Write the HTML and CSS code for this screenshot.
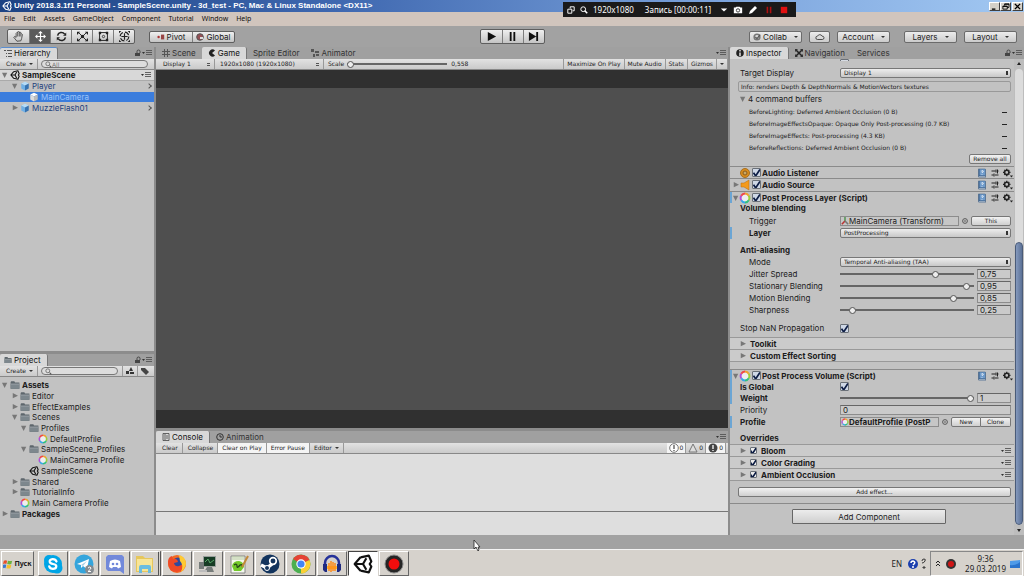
FILE: index.html
```html
<!DOCTYPE html>
<html lang="en">

<head>
    <meta charset="UTF-8">
    <title>Unity 2018.3.1f1 Personal - SampleScene.unity</title>
    <!-- Styles  -->
    <link rel="stylesheet" href="styles.css">
</head>

<body>
    <!-- Icon set -->
    <svg class="icon-defs" width="0" height="0">
        <symbol id="unity" viewBox="0 0 24 24">
            <path d="M12 12L4 12M12 12L16 5M12 12L16 19M9 4L2 12L9 20M9 4L19 2L22 9L20 12L22 15L19 22L9 20" fill="none" stroke="currentColor" stroke-width="2.600" stroke-linejoin="round" />
        </symbol>
        <symbol id="lock" viewBox="0 0 8 8">
            <path d="M1 4h5v3H1z" fill="#444" />
            <path d="M3 4V2.500a1.500 1.500 0 0 1 3 0V4" fill="none" stroke="#444" />
        </symbol>
        <symbol id="menu" viewBox="0 0 10 8">
            <path d="M0 3h3L1.500 5z" fill="#333" />
            <path d="M4 1.500h6M4 3.500h6M4 5.500h6" stroke="#555" stroke-width=".900" />
        </symbol>
        <symbol id="down" viewBox="0 0 8 8"><path d="M0 1h7L3.500 8z" fill="#777" /></symbol>
        <symbol id="right" viewBox="0 0 8 8"><path d="M1 0v7l7-3.500z" fill="#777" /></symbol>
        <symbol id="cube" viewBox="0 0 16 16">
            <path d="M8 1l6 3-6 3-6-3z" fill="#b5dcf8" />
            <path d="M2 4l6 3v8l-6-3z" fill="#6fb0e6" />
            <path d="M14 4L8 7v8l6-3z" fill="#3673b2" />
        </symbol>
        <symbol id="cube-plain" viewBox="0 0 16 16">
            <path d="M8 1l6 3-6 3-6-3z" fill="#fff" />
            <path d="M2 4l6 3v8l-6-3z" fill="#ddd" />
            <path d="M14 4L8 7v8l6-3z" fill="#bbb" />
        </symbol>
        <symbol id="folder" viewBox="0 0 16 14">
            <path d="M1 2l1-1h5l1 2h7v10H1z" fill="#5d666c" />
            <path d="M1 5h14v8H1z" fill="#7d878d" />
            <path d="M1 5.500h14" stroke="#aab1b5" />
        </symbol>
        <symbol id="ring" viewBox="0 0 16 16">
            <circle cx="8" cy="8" r="5.500" fill="#eee" />
            <g fill="none" stroke-width="2.600">
                <path d="M8 2a6 6 0 0 1 5 3" stroke="#f0a030" />
                <path d="M13 5a6 6 0 0 1 0 6" stroke="#9ad03a" />
                <path d="M13 11a6 6 0 0 1-5 3" stroke="#30c080" />
                <path d="M8 14a6 6 0 0 1-5-3" stroke="#38a8e8" />
                <path d="M3 11a6 6 0 0 1 0-6" stroke="#b050d8" />
                <path d="M3 5a6 6 0 0 1 5-3" stroke="#f04848" />
            </g>
        </symbol>
        <symbol id="search" viewBox="0 0 10 10">
            <path d="M6.500 6.500L9 9" stroke="#555" stroke-width="1.500" />
            <circle cx="4" cy="4" r="2.800" fill="none" stroke="#555" />
        </symbol>
        <symbol id="book" viewBox="0 0 16 16">
            <path d="M2 1h11l1 1v13H3l-1-1z" fill="#365980" />
            <path d="M4 2h9v10H4z" fill="#6f9bcb" />
            <path d="M3 14h10" stroke="#fff" />
            <path d="M7 5q3-2 3 1q-2 1-2 2M8 10v1" fill="none" stroke="#fff" stroke-width="1.400" />
        </symbol>
        <symbol id="preset" viewBox="0 0 16 16">
            <path d="M1 4h8M12 4h3M10 1v6M1 12h4M8 12h7M6 9v6M13 1v8" stroke="#222" stroke-width="2" />
        </symbol>
        <symbol id="gear" viewBox="0 0 16 16">
            <circle cx="6" cy="7" r="3.500" fill="none" stroke="#222" stroke-width="2.600" />
            <path d="M6 1v2M6 11v2M0 7h2M10 7h2M2 3l1 1M9 10l1 1M10 3l-1 1M3 10l-1 1" stroke="#222" stroke-width="2" />
            <path d="M11 12h5l-2.500 3z" fill="#222" />
        </symbol>
        <symbol id="target" viewBox="0 0 10 10">
            <circle cx="5" cy="5" r="3" fill="none" stroke="#555" stroke-width="1.200" />
            <circle cx="5" cy="5" r="1" fill="#555" />
        </symbol>
    </svg>

    <!-- Title bar -->
    <header class="titlebar">
        <svg class="i10"><use href="#unity" /></svg>
        <h1>Unity 2018.3.1f1 Personal - SampleScene.unity - 3d_test - PC, Mac &amp; Linux Standalone &lt;DX11&gt;</h1>
        <div class="window-buttons">
            <button aria-label="Minimize"><svg viewBox="0 0 10 8"><path d="M2 7h4" stroke="#000" stroke-width="1.500" /></svg></button>
            <button aria-label="Restore"><svg viewBox="0 0 10 8"><path d="M4 3V1h5v4H7M4 1.500h5M2 3.500h5V7H2zM2 4h5" fill="none" stroke="#000" /></svg></button>
            <button aria-label="Close"><svg viewBox="0 0 10 8"><path d="M2 1l6 6M8 1L2 7" stroke="#000" stroke-width="1.500" /></svg></button>
        </div>
    </header>
    <div class="recorder">
        <svg viewBox="0 0 10 10" class="i8"><path d="M4 3V1h5v5H7M1 4h5v5H1z" fill="none" stroke="#fff" stroke-width="1.200" /></svg>
        <svg viewBox="0 0 10 10" class="i8"><circle cx="4" cy="4" r="3" fill="none" stroke="#fff" stroke-width="1.200" /><path d="M6 6l3 3" stroke="#fff" stroke-width="2" /></svg>
        <span class="rec-size">1920x1080</span>
        <span class="rec-time">Запись [00:00:11]</span>
        <svg viewBox="0 0 10 10" class="i8"><path d="M1 3h8L5 7z" fill="#fff" /></svg>
        <svg viewBox="0 0 12 10" class="i10"><path d="M1 2h2l1-1h4l1 1h2v7H1z" fill="#fff" /><circle cx="6" cy="5.500" r="2" fill="#fff" stroke="#222" /></svg>
        <svg viewBox="0 0 10 10" class="i10"><path d="M1 9l1-3 5-5 2 2-5 5z" fill="#fff" /></svg>
        <svg viewBox="0 0 10 10" class="i8 rec-pause"><path d="M3 1v8M7 1v8" stroke="#b01010" stroke-width="2" /></svg>
        <svg viewBox="0 0 10 10" class="i8 rec-stop"><path d="M1 1h8v8H1z" fill="#e01010" /></svg>
    </div>

    <nav class="menubar">
        <a href="#">File</a>
        <a href="#">Edit</a>
        <a href="#">Assets</a>
        <a href="#">GameObject</a>
        <a href="#">Component</a>
        <a href="#">Tutorial</a>
        <a href="#">Window</a>
        <a href="#">Help</a>
    </nav>

    <!-- Main toolbar -->
    <div class="toolbar">
        <div class="toolbar-left">
            <div class="btn-group tools">
                <button aria-label="Hand"><svg viewBox="0 0 14 14"><path d="M5 13L1 8l1-1 2 1V3l1-1 1 1V1l1-.500L8 1v1l1-.500 1 .500v2l1-.500 1 1-1 5-1 3zM6 3v4M8 2v5M10 4v3" fill="none" stroke="#333" /></svg></button>
                <button class="on" aria-label="Move"><svg viewBox="0 0 14 14"><path d="M7 2v10M2 7h10" stroke="#fff" stroke-width="1.500" /><path d="M7 0l3 3H4zM7 14l3-3H4zM0 7l3-3v6zM14 7l-3-3v6z" fill="#fff" /></svg></button>
                <button aria-label="Rotate"><svg viewBox="0 0 14 14"><path d="M2 6a5 5 0 0 1 9-2M12 8a5 5 0 0 1-9 2" fill="none" stroke="#222" stroke-width="2" /><path d="M13 2v4H9zM1 12V8h4z" fill="#222" /></svg></button>
                <button aria-label="Scale"><svg viewBox="0 0 14 14"><path d="M2 2l10 10M12 2L2 12" stroke="#222" stroke-width="1.200" /><path d="M5 5h4v4H5z" fill="#222" /><path d="M0 1h4L0 5zM14 1h-4l4 4zM0 13h4L0 9zM14 13h-4l4-4z" fill="#222" /></svg></button>
                <button aria-label="Rect"><svg viewBox="0 0 14 14"><path d="M2 2h10v10H2z" fill="none" stroke="#222" stroke-width="1.200" /><circle cx="7" cy="7" r="1.500" fill="none" stroke="#222" /><path d="M1 1h3v3H1zM10 1h3v3h-3zM1 10h3v3H1zM10 10h3v3h-3z" fill="#222" /></svg></button>
                <button aria-label="Transform"><svg viewBox="0 0 14 14"><circle cx="7" cy="7" r="5.500" fill="none" stroke="#222" stroke-width="1.500" stroke-dasharray="6 2.600" /><path d="M7 3v8M3 7h8" stroke="#222" stroke-width="1.500" /><path d="M0 0h3L0 3zM14 0h-3l3 3zM0 14h3l-3-3zM14 14h-3l3-3z" fill="#222" /></svg></button>
            </div>
            <div class="btn-group pivot">
                <button><svg viewBox="0 0 10 8" class="i8"><circle cx="2" cy="4" r="1.500" fill="#a33" /><path d="M5 1h4v6H5z" fill="#944" /></svg>Pivot</button>
                <button><svg viewBox="0 0 8 8" class="i8"><circle cx="4" cy="4" r="3.300" fill="#945055" stroke="#555" /><path d="M4 4h3v2H4z" fill="#ddd" /></svg>Global</button>
            </div>
        </div>
        <div class="btn-group play">
            <button aria-label="Play"><svg viewBox="0 0 12 12"><path d="M2 1v10l9-5z" fill="#111" /></svg></button>
            <button aria-label="Pause"><svg viewBox="0 0 12 12"><path d="M4 1v10M8 1v10" stroke="#111" stroke-width="2" /></svg></button>
            <button aria-label="Step"><svg viewBox="0 0 12 12"><path d="M1 1v10l8-5zM9 1h2v10H9z" fill="#111" /></svg></button>
        </div>
        <div class="toolbar-right">
            <button class="drop"><svg viewBox="0 0 10 10" class="i8"><circle cx="5" cy="5" r="3.500" fill="none" stroke="#777" stroke-width="2" /><path d="M3 5l2 2 4-5" fill="none" stroke="#555" stroke-width="1.500" /></svg>Collab<i class="caret"></i></button>
            <button class="drop cloud" aria-label="Cloud"><svg viewBox="0 0 12 8" class="i10"><path d="M3 7a2 2 0 0 1 0-4 3 3 0 0 1 5.500 0A2 2 0 0 1 9 7z" fill="none" stroke="#333" /></svg></button>
            <button class="drop">Account<i class="caret"></i></button>
            <button class="drop layers">Layers<i class="caret"></i></button>
            <button class="drop">Layout<i class="caret"></i></button>
        </div>
    </div>

    <main class="dock">
        <div class="left">
            <section class="panel hierarchy">
                <div class="tabs">
                    <button class="tab active focus"><svg viewBox="0 0 8 8" class="i8"><path d="M0 1.500h2M3 1.500h5M2 4.500h1M4 4.500h4M2 7.500h1M4 7.500h4" stroke="#555" /></svg>Hierarchy</button>
                    <span class="tab-tools"><svg class="i8"><use href="#lock" /></svg><svg class="i10"><use href="#menu" /></svg></span>
                </div>
                <div class="bar">
                    <button>Create<i class="caret"></i></button>
                    <label class="search"><svg class="i8"><use href="#search" /></svg><input type="text" aria-label="Search hierarchy" placeholder="All"></label>
                </div>
                <ul class="tree tree-scene">
                    <li class="scene"><svg class="fold"><use href="#down" /></svg><svg class="i10 dark"><use href="#unity" /></svg><b>SampleScene</b><svg class="i10 end"><use href="#menu" /></svg></li>
                    <li class="d1 prefab"><svg class="fold"><use href="#down" /></svg><svg class="i10"><use href="#cube" /></svg>Player<span class="end chev"></span></li>
                    <li class="d2 leaf selected"><svg class="i10"><use href="#cube-plain" /></svg>MainCamera</li>
                    <li class="d1 prefab"><svg class="fold"><use href="#right" /></svg><svg class="i10"><use href="#cube" /></svg>MuzzleFlash01<span class="end chev"></span></li>
                </ul>
            </section>
            <section class="panel project">
                <div class="tabs">
                    <button class="tab active"><svg class="i8"><use href="#folder" /></svg>Project</button>
                    <span class="tab-tools"><svg class="i8"><use href="#lock" /></svg><svg class="i10"><use href="#menu" /></svg></span>
                </div>
                <div class="bar">
                    <button>Create<i class="caret"></i></button>
                    <label class="search"><svg class="i8"><use href="#search" /></svg><input type="text" aria-label="Search project"></label>
                    <button class="sq" aria-label="Filter by type"><svg viewBox="0 0 8 8" class="i8"><path d="M0 4h3v3H0zM4 5h4v2H4zM5 0l2 4H3z" fill="#333" /></svg></button>
                    <button class="sq" aria-label="Filter by label"><svg viewBox="0 0 8 8" class="i8"><path d="M0 1h4l4 4-3 3-5-5z" fill="#444" /></svg></button>
                </div>
                <ul class="tree tree-project">
                    <li><svg class="fold"><use href="#down" /></svg><svg class="i10"><use href="#folder" /></svg><b>Assets</b></li>
                    <li class="d1"><svg class="fold"><use href="#right" /></svg><svg class="i10"><use href="#folder" /></svg>Editor</li>
                    <li class="d1"><svg class="fold"><use href="#right" /></svg><svg class="i10"><use href="#folder" /></svg>EffectExamples</li>
                    <li class="d1"><svg class="fold"><use href="#down" /></svg><svg class="i10"><use href="#folder" /></svg>Scenes</li>
                    <li class="d2"><svg class="fold"><use href="#down" /></svg><svg class="i10"><use href="#folder" /></svg>Profiles</li>
                    <li class="d3 leaf"><svg class="i10"><use href="#ring" /></svg>DefaultProfile</li>
                    <li class="d2"><svg class="fold"><use href="#down" /></svg><svg class="i10"><use href="#folder" /></svg>SampleScene_Profiles</li>
                    <li class="d3 leaf"><svg class="i10"><use href="#ring" /></svg>MainCamera Profile</li>
                    <li class="d2 leaf"><svg class="i10 dark"><use href="#unity" /></svg>SampleScene</li>
                    <li class="d1"><svg class="fold"><use href="#right" /></svg><svg class="i10"><use href="#folder" /></svg>Shared</li>
                    <li class="d1"><svg class="fold"><use href="#right" /></svg><svg class="i10"><use href="#folder" /></svg>TutorialInfo</li>
                    <li class="d1 leaf"><svg class="i10"><use href="#ring" /></svg>Main Camera Profile</li>
                    <li><svg class="fold"><use href="#right" /></svg><svg class="i10"><use href="#folder" /></svg><b>Packages</b></li>
                </ul>
            </section>
        </div>

        <div class="center">
            <section class="panel game">
                <div class="tabs">
                    <button class="tab"><svg viewBox="0 0 8 8" class="i8"><path d="M2.500 0v8M5.500 0v8M0 2.500h8M0 5.500h8" stroke="#555" /></svg>Scene</button>
                    <button class="tab active"><svg viewBox="0 0 8 8" class="i8"><path d="M7 1.500A3.500 3.500 0 1 0 7 6.500L4 4z" fill="#222" /></svg>Game</button>
                    <button class="tab">Sprite Editor</button>
                    <button class="tab"><svg viewBox="0 0 8 8" class="i8"><path d="M0 0h3v3H0zM4 2h4v2H4zM2 5h2v3H2zM5 5h3v2H5z" fill="#555" /></svg>Animator</button>
                    <span class="tab-tools"><svg class="i10"><use href="#menu" /></svg></span>
                </div>
                <div class="bar">
                    <select class="bar-select display" aria-label="Display"><option>Display 1</option></select>
                    <select class="bar-select resolution" aria-label="Resolution"><option>1920x1080 (1920x1080)</option></select>
                    <label for="scale" class="bar-label">Scale</label>
                    <input type="range" id="scale" min="0" max="100" value="0">
                    <span class="bar-label">0,558</span>
                    <span class="spacer"></span>
                    <button class="first">Maximize On Play</button>
                    <button>Mute Audio</button>
                    <button>Stats</button>
                    <button>Gizmos</button>
                    <button class="narrow" aria-label="Gizmos menu"><i class="caret"></i></button>
                </div>
                <div class="viewport"><div class="frame"></div></div>
            </section>
            <section class="panel console">
                <div class="tabs">
                    <button class="tab active"><svg viewBox="0 0 8 8" class="i8"><path d="M1 .500h6v7H1zM3 1v6M4 3h2M4 5h2" fill="none" stroke="#444" stroke-width=".800" /></svg>Console</button>
                    <button class="tab"><svg viewBox="0 0 8 8" class="i8"><circle cx="4" cy="4" r="3.300" fill="none" stroke="#333" /><path d="M4 2v2h2" fill="none" stroke="#333" /></svg>Animation</button>
                    <span class="tab-tools"><svg class="i10"><use href="#menu" /></svg></span>
                </div>
                <div class="bar">
                    <button class="clear">Clear</button>
                    <button>Collapse</button>
                    <button class="lit">Clear on Play</button>
                    <button class="lit">Error Pause</button>
                    <button>Editor<i class="caret"></i></button>
                    <span class="spacer"></span>
                    <button class="lit count"><svg viewBox="0 0 10 10" class="i10"><circle cx="5" cy="5" r="4.300" fill="#fff" stroke="#777" /><path d="M5 2v4M5 7v1" stroke="#555" stroke-width="1.300" /></svg>0</button>
                    <button class="count"><svg viewBox="0 0 10 10" class="i10"><path d="M5 1l4 8H1z" fill="#ddd" stroke="#777" /></svg>0</button>
                    <button class="lit count"><svg viewBox="0 0 10 10" class="i10"><circle cx="5" cy="5" r="4.500" fill="#444" /><path d="M5 2v4M5 7v1" stroke="#fff" stroke-width="1.300" /></svg>0</button>
                </div>
                <div class="log"></div>
                <div class="log-detail"></div>
            </section>
        </div>

        <!-- Inspector -->
        <section class="panel inspector">
            <div class="tabs">
                <button class="tab active"><svg viewBox="0 0 8 8" class="i8"><circle cx="4" cy="4" r="3.800" fill="#222" /><path d="M4 1v1.500M4 3.500V7" stroke="#fff" stroke-width="1.300" /></svg>Inspector</button>
                <button class="tab"><svg viewBox="0 0 8 8" class="i8"><path d="M1 1l6 6M7 1L1 7" stroke="#222" stroke-width="1.500" /><path d="M0 0h3L0 3zM5 8h3V5zM5 0h3v3zM0 5v3h3z" fill="#333" /></svg>Navigation</button>
                <button class="tab">Services</button>
                <span class="tab-tools"><svg class="i8"><use href="#lock" /></svg><svg class="i10"><use href="#menu" /></svg></span>
            </div>
            <div class="inspector-body">
                <form class="components">
                    <div class="row cut"><span></span><input type="checkbox" aria-label="Allow MSAA"></div>
                    <div class="row"><label for="target">Target Display</label><select id="target"><option>Display 1</option></select></div>
                    <p class="info">Info: renders Depth &amp; DepthNormals &amp; MotionVectors textures</p>
                    <div class="fold-row"><svg class="fold"><use href="#down" /></svg>4 command buffers</div>
                    <ul class="buffers">
                        <li>BeforeLighting: Deferred Ambient Occlusion (0 B)<button type="button" aria-label="Remove"></button></li>
                        <li>BeforeImageEffectsOpaque: Opaque Only Post-processing (0.7 KB)<button type="button" aria-label="Remove"></button></li>
                        <li>BeforeImageEffects: Post-processing (4.3 KB)<button type="button" aria-label="Remove"></button></li>
                        <li>BeforeReflections: Deferred Ambient Occlusion (0 B)<button type="button" aria-label="Remove"></button></li>
                    </ul>
                    <button type="button" class="mini remove-all">Remove all</button>

                    <div class="comp-head">
                        <span class="fold"></span>
                        <svg viewBox="0 0 12 12" class="i12"><circle cx="6" cy="6" r="4.500" fill="#d98c1e" stroke="#a87020" /><circle cx="6" cy="6" r="2" fill="#c8a868" stroke="#8a5c1c" /></svg>
                        <input type="checkbox" id="listener" checked><label for="listener">Audio Listener</label>
                        <span class="head-tools"><svg class="i10"><use href="#book" /></svg><svg class="i8"><use href="#preset" /></svg><svg class="i10"><use href="#gear" /></svg></span>
                    </div>
                    <div class="comp-head">
                        <svg class="fold"><use href="#right" /></svg>
                        <svg viewBox="0 0 12 12" class="i12"><path d="M2 4h3l5-3v10L5 8H2z" fill="#f39a1c" stroke="#b56a0c" stroke-width=".500" /></svg>
                        <input type="checkbox" id="source" checked><label for="source">Audio Source</label>
                        <span class="head-tools"><svg class="i10"><use href="#book" /></svg><svg class="i8"><use href="#preset" /></svg><svg class="i10"><use href="#gear" /></svg></span>
                    </div>
                    <div class="comp-head script changed">
                        <svg class="fold"><use href="#down" /></svg>
                        <svg class="i12"><use href="#ring" /></svg>
                        <input type="checkbox" id="ppl" checked><label for="ppl">Post Process Layer (Script)</label>
                        <span class="head-tools"><svg class="i10"><use href="#book" /></svg><svg class="i8"><use href="#preset" /></svg><svg class="i10"><use href="#gear" /></svg></span>
                    </div>
                    <h2 class="first">Volume blending</h2>
                    <div class="row sub"><label for="trigger">Trigger</label>
                        <div class="object">
                            <span class="object-field"><svg viewBox="0 0 10 10" class="i8"><path d="M5 5V0" stroke="#383" stroke-width="1.500" /><path d="M5 5l-4 4" stroke="#b33" stroke-width="2" /><path d="M5 5l4 4" stroke="#777" stroke-width="2" /></svg><input type="text" id="trigger" value="MainCamera (Transform)" readonly></span>
                            <svg class="i8"><use href="#target" /></svg>
                            <button type="button" class="mini">This</button>
                        </div>
                    </div>
                    <div class="row sub changed bold"><label for="layer">Layer</label><select id="layer"><option>PostProcessing</option></select></div>
                    <h2>Anti-aliasing</h2>
                    <div class="row sub"><label for="mode">Mode</label><select id="mode"><option>Temporal Anti-aliasing (TAA)</option></select></div>
                    <div class="row sub"><label for="jitter">Jitter Spread</label><div class="slider"><input type="range" id="jitter" min="10" max="100" value="75"><input type="text" value="0,75" aria-label="Jitter value"></div></div>
                    <div class="row sub"><label for="stationary">Stationary Blending</label><div class="slider"><input type="range" id="stationary" min="0" max="99" value="96"><input type="text" value="0,95" aria-label="Stationary value"></div></div>
                    <div class="row sub"><label for="motion">Motion Blending</label><div class="slider"><input type="range" id="motion" min="0" max="99" value="86"><input type="text" value="0,85" aria-label="Motion value"></div></div>
                    <div class="row sub"><label for="sharp">Sharpness</label><div class="slider"><input type="range" id="sharp" min="0" max="300" value="22"><input type="text" value="0,25" aria-label="Sharpness value"></div></div>
                    <div class="row stop"><label for="nan">Stop NaN Propagation</label><input type="checkbox" id="nan" checked></div>
                    <div class="group">
                        <div class="group-head"><svg class="fold"><use href="#right" /></svg>Toolkit</div>
                        <div class="group-head"><svg class="fold"><use href="#right" /></svg>Custom Effect Sorting</div>
                    </div>

                    <div class="comp-head volume changed">
                        <svg class="fold"><use href="#down" /></svg>
                        <svg class="i12"><use href="#ring" /></svg>
                        <input type="checkbox" id="ppv" checked><label for="ppv">Post Process Volume (Script)</label>
                        <span class="head-tools"><svg class="i10"><use href="#book" /></svg><svg class="i8"><use href="#preset" /></svg><svg class="i10"><use href="#gear" /></svg></span>
                    </div>
                    <div class="row tight changed bold"><label for="global">Is Global</label><input type="checkbox" id="global" checked></div>
                    <div class="row changed bold"><label for="weight">Weight</label><div class="slider"><input type="range" id="weight" min="0" max="1" value="1"><input type="text" value="1" aria-label="Weight value"></div></div>
                    <div class="row"><label for="priority">Priority</label><input type="text" id="priority" value="0"></div>
                    <div class="row changed bold"><label for="profile">Profile</label>
                        <div class="object">
                            <span class="object-field"><svg class="i8"><use href="#ring" /></svg><input type="text" id="profile" value="DefaultProfile (PostP" readonly></span>
                            <svg class="i8"><use href="#target" /></svg>
                            <span class="pair"><button type="button" class="mini">New</button><button type="button" class="mini">Clone</button></span>
                        </div>
                    </div>
                    <h2 class="overrides-title">Overrides</h2>
                    <div class="group overrides">
                        <div class="group-head"><svg class="fold"><use href="#right" /></svg><input type="checkbox" id="bloom" checked><label for="bloom">Bloom</label><svg class="i10 end"><use href="#menu" /></svg></div>
                        <div class="group-head"><svg class="fold"><use href="#right" /></svg><input type="checkbox" id="grading" checked><label for="grading">Color Grading</label><svg class="i10 end"><use href="#menu" /></svg></div>
                        <div class="group-head"><svg class="fold"><use href="#right" /></svg><input type="checkbox" id="ao" checked><label for="ao">Ambient Occlusion</label><svg class="i10 end"><use href="#menu" /></svg></div>
                    </div>
                    <button type="button" class="mini add-effect">Add effect...</button>
                    <div class="footer"><button type="button" class="add-component">Add Component</button></div>
                </form>
                <div class="scrollbar"><i class="arrow-up"></i><div class="track"><div class="thumb"></div></div><i class="arrow-down"></i></div>
            </div>
        </section>
    </main>

    <div class="statusbar">
        <svg class="cursor" viewBox="0 0 8 12"><path d="M1 1v9l2-2 2 4 1-1-1-3h2z" fill="#fff" stroke="#222" stroke-width=".800" /></svg>
    </div>

    <!-- Windows taskbar -->
    <footer class="taskbar">
        <button class="start"><svg viewBox="0 0 12 12" class="i10"><path d="M1 2q2-1 4 0L4 6Q2 5 0 6z" fill="#e8502a" /><path d="M6 2q3 1 5 0l-1 4q-2 1-5 0z" fill="#6cb33e" /><path d="M0 7q2-1 4 0l-1 4q-2-1-3 0z" fill="#3a78d0" /><path d="M5 7q2 1 5 0l-1 4q-2 1-5 0z" fill="#f5c02c" /></svg>Пуск</button>
        <div class="apps">
            <button aria-label="Skype"><svg viewBox="0 0 20 20"><circle cx="10" cy="10" r="9" fill="#00a5e6" /><circle cx="6" cy="6" r="5" fill="#00a5e6" /><circle cx="14" cy="14" r="5.500" fill="#00a5e6" /><path d="M13.500 7.500Q12.500 5 9.500 5.200Q6.500 5.500 6.700 7.700Q7 9.500 10 10Q13.500 10.600 13.300 12.500Q13 14.800 10 14.800Q7 14.700 6.200 12.300" fill="none" stroke="#fff" stroke-width="2.200" stroke-linecap="round" /></svg></button>
            <button aria-label="Telegram"><svg viewBox="0 0 20 20"><circle cx="10" cy="10" r="9.500" fill="#35a5dc" /><path d="M3 10l12-5-2 10-4-3-2 2v-3z" fill="#fff" /><path d="M7 11l6-4-4 5z" fill="#a8cfe6" /><circle cx="15.500" cy="15.500" r="4.500" fill="#858b90" /><path d="M14 14q2-2 3 0q0 1-3 3.500h3" fill="none" stroke="#fff" /></svg></button>
            <button aria-label="Discord"><svg viewBox="0 0 20 20"><path d="M3 1h14l2 2v17l-4-3H3l-2-2V3z" fill="#7289da" /><path d="M5 7q5-3 10 0l1 6-3 1.500-1-1.500H8l-1 1.500L4 13z" fill="#fff" /><circle cx="8" cy="10" r="1.300" fill="#7289da" /><circle cx="12" cy="10" r="1.300" fill="#7289da" /></svg></button>
            <button class="stack" aria-label="Explorer"><svg viewBox="0 0 20 20"><path d="M1 2h7l2 2h8v14H1z" fill="#e6c75c" /><path d="M2 5h15v12H2z" fill="#f8e597" /><path d="M4 19v-6q0-2 2-2h8q2 0 2 2v6h-3v-4H7v4z" fill="#6cbde0" /></svg></button>
            <button aria-label="Firefox"><svg viewBox="0 0 20 20"><circle cx="10" cy="10" r="9" fill="#f26a21" /><circle cx="11" cy="9" r="5.500" fill="#304a9c" /><path d="M1 8q0-5 4-6l1 3q4-1 5 3l-4 1q1 4 5 3 4-1 5-5 1 10-7 11Q1 18 1 8z" fill="#ef4a26" /><path d="M12 1q7 2 7 9-1 5-5 8 3-7-1-11z" fill="#ffca32" /></svg></button>
            <button aria-label="Monitor"><svg viewBox="0 0 20 20"><path d="M5 2h13v11H5z" fill="#9aa09c" /><path d="M6 3h11v9H6z" fill="#173c24" /><path d="M7 8l3-3 2 4 4-3" fill="none" stroke="#58a868" /><path d="M1 8h5v7H1zM9 13h5l2 5H6z" fill="#777d7b" /><path d="M1 16h8v2H1z" fill="#bbb" /></svg></button>
            <button aria-label="Notepad++"><svg viewBox="0 0 20 20"><path d="M2 2h14v17H2z" fill="#f4f8ee" stroke="#888" /><path d="M3 3h12M3 5h12" stroke="#b4c89c" /><path d="M3 12q1-5 7-5 5 1 5 6l-3 4H5z" fill="#73c92b" /><path d="M5 11q3-2 3 1t3-1q3-1 2 2" fill="none" stroke="#25431a" stroke-width="1.300" /><path d="M13 13l6-11" stroke="#c28a39" stroke-width="2" /></svg></button>
            <button aria-label="Steam"><svg viewBox="0 0 20 20"><circle cx="10" cy="10" r="9.500" fill="#13345d" /><circle cx="13" cy="7" r="3.300" fill="none" stroke="#fff" stroke-width="1.700" /><path d="M1 11l6 3 5-4" fill="none" stroke="#fff" stroke-width="3.500" /><circle cx="7" cy="14" r="2.500" fill="#13345d" stroke="#fff" /></svg></button>
            <button aria-label="Chrome"><svg viewBox="0 0 20 20"><circle cx="10" cy="10" r="9.500" fill="#4caf50" /><path d="M10 10L2 5a9.500 9.500 0 0 1 16.500 1z" fill="#e64235" /><path d="M10 10l8.500-4A9.500 9.500 0 0 1 10 19.500z" fill="#fbcf34" /><circle cx="10" cy="10" r="4.700" fill="#fff" /><circle cx="10" cy="10" r="3.600" fill="#4285f4" /></svg></button>
            <button aria-label="Audacity"><svg viewBox="0 0 20 20"><path d="M3 13V9a7 7 0 0 1 14 0v4" fill="none" stroke="#26329a" stroke-width="2.500" /><path d="M5 12h10v3H5z" fill="#ffb52e" /><path d="M7 9v8M9 7v11M11 8v9M13 9v8" stroke="#ff8b19" stroke-width="1.500" /><path d="M1 10h4v8H3l-2-2zM15 10h4v6l-2 2h-2z" fill="#202b80" /></svg></button>
            <button class="active" aria-label="Unity"><svg class="dark"><use href="#unity" /></svg></button>
            <button aria-label="Recorder"><svg viewBox="0 0 20 20"><circle cx="10" cy="10" r="9" fill="#252525" stroke="#888" /><circle cx="10" cy="10" r="5.500" fill="#f20d0d" /></svg></button>
        </div>
        <div class="tray">
            <span class="lang">EN</span>
            <svg viewBox="0 0 12 12" class="i12 help"><circle cx="6" cy="6" r="5" fill="#1b3fae" /><path d="M4 5q0-2 2-2 3 1 1 3l-1 1M6 8v2" fill="none" stroke="#fff" stroke-width="1.500" /></svg>
            <svg viewBox="0 0 6 12" class="grip"><path d="M1 3q0-2 2-2t1 2q-1 2-3 2M2 9h2v1H2z" fill="none" stroke="#333" /></svg>
            <div class="tray-box">
                <svg viewBox="0 0 6 8" class="up"><path d="M1 3l2-2 2 2M1 6l2-2 2 2" fill="none" stroke="#222" /></svg>
                <svg viewBox="0 0 12 12" class="i12"><circle cx="6" cy="6" r="5" fill="#333" /><circle cx="6" cy="6" r="3" fill="#d01515" /></svg>
                <time class="clock">9:36<br>29.03.2019</time>
                <svg viewBox="0 0 10 8" class="i10"><path d="M0 1l10-1v8H0z" fill="#4f9be8" /><path d="M0 5q5 1 10-3v6H0z" fill="#2b74cc" /></svg>
            </div>
        </div>
    </footer>
</body>

</html>
```
FILE: styles.css
```css
* {
    box-sizing: border-box;
}

body {
    margin: 0;
    height: 100vh;
    display: flex;
    flex-direction: column;
    overflow: hidden;
    font-family: Inter, "Noto Sans", sans-serif;
    font-size: 8px;
    line-height: 10px;
    color: #1c1c1c;
    background: #a2a2a2;
}

button,
input,
select {
    font: inherit;
    color: inherit;
    margin: 0;
    padding: 0;
    border: 0;
    border-radius: 0;
    background: none;
    appearance: none;
    outline: none;
}

button {
    display: flex;
    align-items: center;
    justify-content: center;
    white-space: nowrap;
}

svg {
    flex: none;
    display: block;
}

ul,
h1,
h2,
p {
    margin: 0;
    padding: 0;
    list-style: none;
    font-size: 8px;
}

.icon-defs {
    position: absolute;
}

.i8 {
    width: 8px;
    height: 8px;
}

.i10 {
    width: 10px;
    height: 10px;
}

.i12 {
    width: 12px;
    height: 12px;
}

.dark {
    color: #111;
}

.fold {
    width: 6px;
    height: 6px;
    flex: none;
}

.end {
    margin-left: auto;
}

.spacer {
    flex: 1;
}

.caret {
    border: 2px solid transparent;
    border-top: 2px solid #333;
    border-bottom: 0;
    margin-left: 3px;
}

/* Title bar */
.titlebar {
    flex: none;
    display: flex;
    align-items: center;
    gap: 2px;
    height: 12px;
    padding: 0 1px 0 2px;
    color: #fff;
    background: linear-gradient(to right, #1c4283, #3f68b0 33%, #7ba3dc 70%, #a2c8f2);
}

.titlebar h1 {
    font-family: "Liberation Sans", sans-serif;
    font-size: 8px;
}

.window-buttons {
    display: flex;
    margin-left: auto;
}

.window-buttons button {
    width: 11px;
    height: 9px;
    background: #d4d0c8;
    border: 1px solid;
    border-color: #fff #404040 #404040 #fff;
}

.window-buttons button:last-child {
    margin-left: 1px;
}

.window-buttons svg {
    width: 9px;
    height: 7px;
}

.recorder {
    position: absolute;
    top: 2px;
    left: 563px;
    z-index: 2;
    display: flex;
    align-items: center;
    gap: 5px;
    height: 15px;
    width: 233px;
    padding-left: 4px;
    color: #fff;
    background: #1a1a1a;
    font-family: "Noto Sans", sans-serif;
}

.rec-time {
    margin: 0 4px 0 6px;
}

.rec-pause {
    margin-left: 2px;
}

.rec-stop {
    margin-left: 2px;
}

.menubar {
    flex: none;
    display: flex;
    align-items: center;
    gap: 8px;
    height: 14px;
    padding-left: 4px;
    background: #d1c5bd;
    font-family: "Noto Sans", sans-serif;
    font-size: 7px;
}

.menubar a {
    color: #111;
    text-decoration: none;
}

/* Main toolbar */
.toolbar {
    flex: none;
    display: grid;
    grid-template-columns: 1fr auto 1fr;
    align-items: center;
    height: 21px;
    padding: 0 7px;
    background: #a2a2a2;
}

.toolbar-left,
.toolbar-right {
    display: flex;
    align-items: center;
}

.toolbar-right {
    justify-content: flex-end;
    gap: 7px;
}

.btn-group {
    display: flex;
    border: 1px solid #5e5e5e;
    border-radius: 2px;
    background: linear-gradient(#efefef, #c4c4c4);
}

.btn-group button + button {
    border-left: 1px solid #7d7d7d;
}

.tools button,
.play button {
    width: 21px;
    height: 13px;
}

.tools .on {
    background: #5a5a5a;
}

.tools svg,
.play svg {
    width: 11px;
    height: 11px;
}

.pivot {
    margin-left: 14px;
}

.pivot button {
    width: 42px;
    height: 10px;
    gap: 2px;
}

.drop {
    height: 12px;
    min-width: 53px;
    gap: 2px;
    border: 1px solid #6b6b6b;
    border-radius: 2px;
    background: linear-gradient(#ececec, #cbcbcb);
}

.drop.cloud {
    min-width: 21px;
}

.drop.layers {
    margin-left: 7px;
}

.drop .caret {
    margin-left: 5px;
}

/* Dock */
.dock {
    flex: 1;
    min-height: 0;
    display: grid;
    grid-template-columns: 154px minmax(0, 1fr) 294px;
    gap: 2px;
    background: #8c8c8c;
}

.left,
.center {
    display: flex;
    flex-direction: column;
    gap: 3px;
    min-height: 0;
}

.panel {
    display: flex;
    flex-direction: column;
    min-height: 0;
    background: #c2c2c2;
}

.hierarchy,
.game {
    flex: 1;
}

.project {
    flex: 0 0 181px;
}

.console {
    flex: 0 0 104px;
}

.tabs {
    flex: none;
    display: flex;
    height: 12px;
    background: #a0a0a0;
}

.tab {
    gap: 2px;
    padding: 0 6px 0 4px;
    color: #333;
}

.tab.active {
    color: #111;
    background: #d8d8d8;
    border-right: 1px solid #777;
    border-radius: 2px 2px 0 0;
}

.tab.focus {
    box-shadow: inset 0 1px #5b8ed0;
}

.tab-tools {
    display: flex;
    align-items: center;
    margin-left: auto;
    padding-right: 2px;
}

.tab-tools .i10,
.end.i10 {
    width: 10px;
    height: 8px;
}

.bar {
    flex: none;
    display: flex;
    height: 11px;
    padding: 0 2px;
    font-family: "DejaVu Sans", sans-serif;
    font-size: 6px;
    background: linear-gradient(#e2e2e2, #cacaca);
    border-bottom: 1px solid #888;
}

.bar button {
    padding: 0 4px;
    border-right: 1px solid #999;
}

.game .bar {
    padding-right: 0;
}

.game .bar button {
    padding: 0 3px;
}

.bar .first {
    border-left: 1px solid #999;
}

.bar .sq {
    padding: 0 3px;
    border-left: 1px solid #999;
    border-right: 0;
}

.bar .narrow .caret {
    margin: 0;
}

.bar .clear {
    margin-right: 1px;
}

.bar .lit {
    background: #f4f4f4;
}

.bar .count {
    gap: 1px;
    padding: 0 2px;
}

.bar-label {
    margin-left: 4px;
}

.bar-select {
    padding: 0 5px;
    border-right: 1px solid #999;
    background: linear-gradient(#555, #555) right 4px top 4px / 3px 1px no-repeat, linear-gradient(#555, #555) right 4px top 6px / 3px 1px no-repeat;
}

.display {
    width: 57px;
}

.resolution {
    width: 109px;
}

#scale {
    width: 100px;
    margin: 0 0 0 3px;
}

.search {
    flex: 1;
    display: flex;
    align-items: center;
    min-width: 0;
    margin: 1px 4px 1px 3px;
    padding-left: 3px;
    border: 1px solid #777;
    border-radius: 5px;
    background: #ddd;
}

.search input {
    width: 100%;
    min-width: 0;
    height: 7px;
    line-height: 7px;
}

.search .i8 {
    width: 7px;
    height: 7px;
}

/* Trees */
.tree {
    display: grid;
    grid-auto-rows: 1fr;
}

.tree-scene {
    height: 43px;
}

.tree-project {
    height: 139px;
    margin-top: 3px;
}

.tree li {
    display: flex;
    align-items: center;
    gap: 2px;
    padding: 0 3px 0 2px;
}

.tree .d1 {
    padding-left: 12px;
}

.tree .d2 {
    padding-left: 21px;
}

.tree .d3 {
    padding-left: 30px;
}

.tree .leaf > .i10:first-child {
    margin-left: 8px;
}

.tree .scene {
    background: #d8d8d8;
    border-bottom: 1px solid #aaa;
}

.prefab {
    color: #23417c;
}

.tree .selected {
    color: #9cc4fa;
    background: #3b7ddd;
}

.chev {
    width: 4px;
    height: 4px;
    border: 1px solid #555;
    border-width: 1px 1px 0 0;
    transform: rotate(45deg);
}

/* Game view and console */
.viewport {
    flex: 1;
    display: flex;
    align-items: center;
    background: #303030;
}

.frame {
    width: 100%;
    aspect-ratio: 16 / 9;
    background: #4f4f4f;
}

.game .tab {
    padding-left: 6px;
}

.console .tab,
.inspector .tab {
    padding-left: 6px;
}

.log {
    flex: 1;
    background: #dedede;
    border-bottom: 1px solid #777;
}

.log-detail {
    flex: 0 0 23px;
    background: #dedede;
}

/* Inspector */
.inspector-body {
    flex: 1;
    min-height: 0;
    display: flex;
}

.components {
    flex: 1;
    min-width: 0;
}

.row {
    display: grid;
    grid-template-columns: 100px minmax(0, 1fr);
    align-items: center;
    height: 12px;
    padding: 0 3px 0 10px;
}

.row.sub {
    grid-template-columns: 91px minmax(0, 1fr);
    padding-left: 19px;
}

.row.tight {
    height: 11px;
}

.row.cut {
    height: 2px;
    margin-bottom: 6px;
    overflow: hidden;
    align-items: end;
}

.row.stop {
    margin: 6px 0 3px;
}

.bold {
    font-weight: bold;
}

.changed {
    box-shadow: inset 2px 0 #6ba5d4;
}

.components select,
.components input[type="text"] {
    width: 100%;
    height: 10px;
    font-weight: normal;
}

.components select {
    padding: 0 3px;
    line-height: 8px;
    font-family: "DejaVu Sans", sans-serif;
    font-size: 6px;
    border: 1px solid #777;
    border-radius: 2px;
    background: linear-gradient(#333, #333) right 2px center / 2px 4px no-repeat, linear-gradient(#ededed, #c8c8c8);
}

.components input[type="text"] {
    padding: 0 2px;
    line-height: 8px;
    border: 1px solid #8c8c8c;
    border-top-color: #666;
    background: #cacaca;
}

input[type="checkbox"] {
    width: 9px;
    height: 9px;
    border: 1px solid #6a7078;
    border-radius: 1px;
    background: #d6dbe3;
}

input[type="checkbox"]:checked {
    background: url("data:image/svg+xml,%3Csvg xmlns='http://www.w3.org/2000/svg' viewBox='0 0 8 8'%3E%3Cpath d='M1 4l2 3 4-6' fill='none' stroke='%230c1c44' stroke-width='1.600'/%3E%3C/svg%3E") center / 8px 8px no-repeat #cfd8e6;
}

input[type="range"] {
    height: 8px;
    align-self: center;
    background: linear-gradient(#666, #666) center / 100% 2px no-repeat;
}

input[type="range"]::-webkit-slider-thumb {
    appearance: none;
    width: 7px;
    height: 7px;
    border: 1px solid #555;
    border-radius: 50%;
    background: #ededed;
}

.slider {
    display: grid;
    grid-template-columns: minmax(0, 1fr) 34px;
    gap: 3px;
}

.info {
    height: 11px;
    margin: 2px 3px 1px 8px;
    padding: 0 2px;
    line-height: 9px;
    font-family: "DejaVu Sans", sans-serif;
    font-size: 6px;
    border: 1px solid #999;
    border-radius: 2px;
}

.fold-row {
    display: flex;
    align-items: center;
    gap: 2px;
    height: 12px;
    padding-left: 10px;
}

.buffers {
    margin-top: 1px;
    font-family: "DejaVu Sans", sans-serif;
}

.buffers li {
    display: flex;
    align-items: center;
    justify-content: space-between;
    height: 12px;
    padding: 0 7px 0 19px;
    font-size: 6px;
}

.buffers button {
    width: 5px;
    height: 1px;
    background: #222;
}

.mini {
    height: 10px;
    font-family: "DejaVu Sans", sans-serif;
    font-size: 6px;
    font-weight: normal;
    border: 1px solid #777;
    border-radius: 2px;
    background: linear-gradient(#f2f2f2, #cfcfcf);
}

.remove-all {
    width: 42px;
    margin: 0 3px 2px auto;
}

.comp-head {
    display: flex;
    align-items: center;
    height: 12px;
    padding: 0 1px 0 3px;
    font-weight: bold;
    border-top: 1px solid #8a8a8a;
}

.comp-head input {
    margin: 0 1px;
}

.script {
    margin-top: 1px;
}

.volume {
    margin-top: 7px;
}

.head-tools {
    display: flex;
    align-items: center;
    gap: 4px;
    margin-left: auto;
}

.components h2 {
    height: 12px;
    margin-top: 5px;
    padding-left: 10px;
    line-height: 12px;
}

.components h2.first {
    height: 10px;
    margin: 0 0 2px;
    line-height: 10px;
}

.components h2.overrides-title {
    margin-top: 4px;
}

.object {
    display: flex;
    align-items: center;
    gap: 2px;
}

.object-field {
    flex: 1;
    display: flex;
    align-items: center;
    height: 10px;
    border: 1px solid #8c8c8c;
    background: #c6c6c6;
}

.object-field input[type="text"] {
    height: 8px;
    border: 0;
    padding: 0;
    background: none;
    font-weight: inherit;
}

.object .mini {
    width: 40px;
}

.pair {
    display: flex;
}

.object .pair .mini {
    width: 30px;
    border-radius: 2px 0 0 2px;
}

.object .pair .mini + .mini {
    border-left: 0;
    border-radius: 0 2px 2px 0;
}

.group {
    border-bottom: 1px solid #999;
}

.group-head {
    display: flex;
    align-items: center;
    height: 12px;
    padding: 0 3px 0 10px;
    font-weight: bold;
    border-top: 1px solid #999;
    background: #cbcbcb;
}

.group-head .fold {
    margin-right: 4px;
}

.overrides input {
    width: 7px;
    height: 7px;
    margin: 0 4px 0 0;
}

.overrides input:checked {
    background-color: #ececec;
}

.add-effect {
    width: calc(100% - 11px);
    margin: 6px 3px 6px 8px;
}

.footer {
    display: flex;
    justify-content: center;
    padding: 5px 6px 0 0;
    border-top: 1px solid #8a8a8a;
}

.add-component {
    width: 154px;
    height: 15px;
    border: 1px solid #666;
    border-radius: 1px;
    background: linear-gradient(#ececec, #cfcfcf);
}

.scrollbar {
    flex: 0 0 10px;
    display: flex;
    flex-direction: column;
    align-items: center;
    padding: 3px 0;
    background: #bdbdbd;
}

.arrow-up,
.arrow-down {
    border: 2px solid transparent;
    border-bottom: 3px solid #222;
    border-top: 0;
}

.arrow-down {
    border-top: 3px solid #222;
    border-bottom: 0;
}

.track {
    flex: 1;
    display: flex;
    align-items: flex-end;
    width: 8px;
    margin: 4px 0;
    border-radius: 4px;
    background: #dcdcdc;
}

.thumb {
    width: 8px;
    height: 62%;
    border: 1px solid #4a5b78;
    border-radius: 4px;
    background: linear-gradient(to right, #8499bd, #5c7196);
}

.statusbar {
    position: relative;
    flex: 0 0 14px;
    background: #a2a2a2;
}

.cursor {
    position: absolute;
    left: 473px;
    top: 4px;
    width: 8px;
    height: 12px;
}

/* Taskbar */
.taskbar {
    flex: none;
    display: flex;
    height: 27px;
    padding: 1px 1px 0;
    background: #d6d2cc;
    border-top: 1px solid #f4f4f4;
    font-family: "Noto Sans", sans-serif;
}

.taskbar button {
    border: 1px solid;
    border-color: #fff #666 #666 #fff;
}

.taskbar .start {
    width: 33px;
    gap: 1px;
    font-size: 7px;
    font-weight: bold;
}

.apps {
    display: flex;
    gap: 1px;
    margin-left: 4px;
}

.apps button {
    width: 30px;
}

.apps svg {
    width: 20px;
    height: 20px;
}

.taskbar .stack {
    border-right: 3px double #555;
}

.taskbar .apps .active {
    background: #fff;
    border-color: #444 #fff #fff #444;
}

.tray {
    display: flex;
    align-items: center;
    margin-left: auto;
}

.help {
    margin: 0 2px 0 5px;
}

.grip {
    width: 6px;
    height: 12px;
    margin-right: 3px;
}

.tray-box {
    display: flex;
    align-items: center;
    height: 100%;
    padding: 0 2px 0 4px;
    gap: 4px;
    border: 1px solid;
    border-color: #888 #fff #fff #888;
}

.up {
    width: 6px;
    height: 8px;
}

.clock {
    margin-left: 4px;
    text-align: center;
}
```
